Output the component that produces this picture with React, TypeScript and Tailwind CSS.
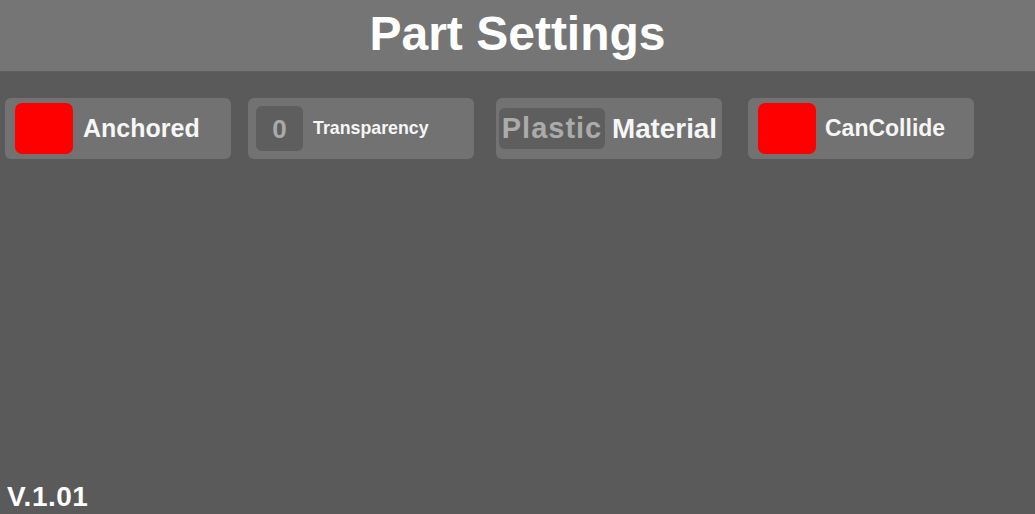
import React from 'react';

const font = { fontFamily: '"Liberation Sans", Arial, sans-serif' };

const Toggle: React.FC<{ label: string; labelClass: string }> = ({ label, labelClass }) => (
  <div className="flex items-center h-[61px] w-[226px] rounded-[6px] bg-[#727272] pl-[10px]">
    <div className="w-[58px] h-[51px] rounded-[7px] bg-[#ff0000] shrink-0" />
    <span className={`font-bold text-[#f6f6f6] ${labelClass}`}>{label}</span>
  </div>
);

const App: React.FC = () => {
  return (
    <div className="w-[1035px] h-[514px] bg-[#5a5a5a] flex flex-col overflow-hidden" style={font}>
      <header className="h-[72px] bg-[#757575] border-b border-[#606060] flex items-center justify-center shrink-0">
        <h1 className="text-[48px] font-bold text-white leading-none -mt-[3px]">Part Settings</h1>
      </header>

      <div className="flex items-start mt-[26px] pl-[5px]">
        <Toggle label="Anchored" labelClass="text-[25px] ml-[10px]" />

        {/* transparency value box */}
        <div className="flex items-center h-[61px] w-[226px] rounded-[6px] bg-[#727272] ml-[17px] pl-[8px]">
          <div className="w-[47px] h-[45px] rounded-[6px] bg-[#5e5e5e] flex items-center justify-center">
            <span className="text-[26px] font-bold text-[#a9a9a9] leading-none">0</span>
          </div>
          <span className="ml-[10px] text-[17.8px] font-bold text-[#f6f6f6]">Transparency</span>
        </div>

        {/* material picker */}
        <div className="flex items-center h-[61px] w-[226px] rounded-[6px] bg-[#727272] ml-[22px] pl-[3px]">
          <div className="w-[106px] h-[41px] rounded-[6px] bg-[#5e5e5e] flex items-center justify-center overflow-hidden">
            <span className="text-[29px] font-bold text-[#ababab] leading-none tracking-[1px]">Plastic</span>
          </div>
          <span className="ml-[7px] text-[27.8px] font-bold text-[#f6f6f6]">Material</span>
        </div>

        <div className="ml-[26px]">
          <Toggle label="CanCollide" labelClass="text-[23px] ml-[9px]" />
        </div>
      </div>

      <div className="mt-auto pl-[7px] pb-[1px]">
        <span className="text-[28px] font-bold text-white leading-none tracking-[0.5px]">V.1.01</span>
      </div>
    </div>
  );
};

export default App;
